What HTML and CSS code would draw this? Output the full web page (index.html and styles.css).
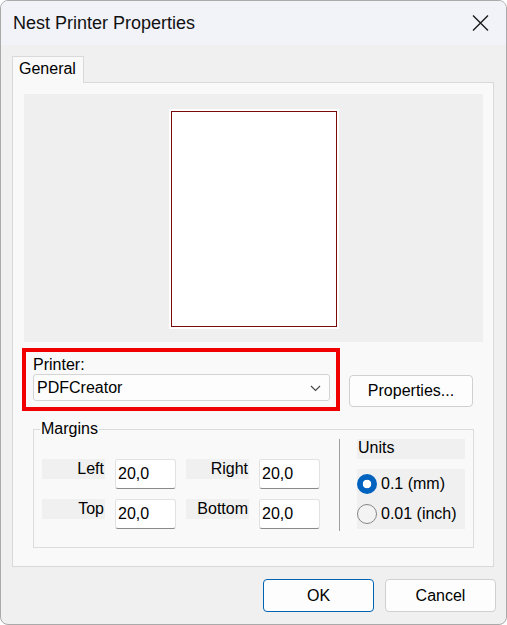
FILE: index.html
```html
<!DOCTYPE html>
<html>
<head>
<meta charset="utf-8">
<link rel="stylesheet" href="styles.css">
</head>
<body>
<div class="window">
  <div class="titlebar">
    <span class="title">Nest Printer Properties</span>
    <svg class="close" width="17" height="16" viewBox="0 0 17 16"><path d="M1 0.5 L16 15.5 M16 0.5 L1 15.5" stroke="#1a1a1a" stroke-width="1.4" fill="none"/></svg>
  </div>
  <div class="body">
    <div class="tabs"><div class="tab">General</div></div>
    <div class="panel">
      <div class="preview"><div class="page"></div></div>
      <div class="printer-row">
        <div class="highlight">
          <div class="lbl">Printer:</div>
          <div class="combo">
            <span>PDFCreator</span>
            <svg class="chev" width="11" height="7" viewBox="0 0 11 7"><path d="M1 1 L5.5 5.5 L10 1" stroke="#444" stroke-width="1.1" fill="none"/></svg>
          </div>
        </div>
        <div class="btn props">Properties...</div>
      </div>
      <fieldset class="margins">
        <legend>Margins</legend>
        <div class="mgrid">
          <div class="mlabel">Left</div><div class="input">20,0</div>
          <div class="mlabel">Right</div><div class="input">20,0</div>
          <div class="mlabel">Top</div><div class="input">20,0</div>
          <div class="mlabel">Bottom</div><div class="input">20,0</div>
        </div>
        <div class="sep"></div>
        <div class="units">
          <div class="ulabel">Units</div>
          <div class="radios">
            <div class="radio"><span class="dot on"></span><span>0.1 (mm)</span></div>
            <div class="radio"><span class="dot"></span><span>0.01 (inch)</span></div>
          </div>
        </div>
      </fieldset>
    </div>
    <div class="buttons">
      <div class="btn ok">OK</div>
      <div class="btn cancel">Cancel</div>
    </div>
  </div>
</div>
</body>
</html>
```
FILE: styles.css
```css
html, body {
  margin: 0;
  padding: 0;
  background: #ffffff;
}
body {
  font-family: "Liberation Sans", Arial, sans-serif;
  font-size: 16px;
  color: #000;
}
.window {
  width: 507px;
  height: 625px;
  box-sizing: border-box;
  border: 1px solid #aaaaaa;
  border-radius: 8px;
  overflow: hidden;
  background: #f0f0f0;
}
.titlebar {
  height: 44px;
  background: #f1f3f9;
  display: flex;
  align-items: center;
  justify-content: space-between;
}
.title {
  font-size: 18px;
  padding-left: 12px;
  color: #111;
}
.close {
  margin-right: 17px;
}
.body {
  padding: 11px 12px 0 11px;
}
.tabs {
  display: flex;
}
.tab {
  position: relative;
  z-index: 1;
  width: 72px;
  height: 27px;
  box-sizing: border-box;
  border: 1px solid #d9d9d9;
  border-bottom: none;
  background: #f9f9f9;
  padding: 3px 0 0 6px;
  line-height: 18px;
}
.panel {
  margin-top: -1px;
  height: 485px;
  box-sizing: border-box;
  border: 1px solid #d9d9d9;
  background: #f9f9f9;
  padding: 11px 10px 0 11px;
}
.preview {
  width: 459px;
  height: 248px;
  box-sizing: border-box;
  background: #efefef;
  padding-top: 15px;
  display: flex;
  justify-content: center;
}
.page {
  width: 170px;
  height: 220px;
  box-sizing: border-box;
  background: #ffffff;
  padding: 2px;
  margin-left: 1px;
}
.page::before {
  content: "";
  display: block;
  width: 100%;
  height: 100%;
  box-sizing: border-box;
  border: 1px solid #7a0a0a;
}
.printer-row {
  display: flex;
  margin-top: 6px;
  margin-left: -2px;
}
.highlight {
  width: 318px;
  box-sizing: border-box;
  border: 4px solid #f00000;
  padding: 4px 6px 6px 7px;
}
.lbl {
  line-height: 18px;
}
.combo {
  height: 27px;
  box-sizing: border-box;
  border: 1px solid #d4d4d4;
  border-radius: 3px;
  background: #fdfdfd;
  display: flex;
  align-items: center;
  justify-content: space-between;
  padding: 1px 8px 0 3px;
}
.chev {
  margin-top: 1px;
}
.btn {
  box-sizing: border-box;
  border: 1px solid #d0d0d0;
  border-radius: 4px;
  background: #fdfdfd;
  display: flex;
  align-items: center;
  justify-content: center;
}
.props {
  align-self: flex-end;
  margin-left: 9px;
  margin-bottom: 4px;
  width: 124px;
  height: 32px;
}
.margins {
  margin: 9px 0 0 9px;
  width: 441px;
  min-width: 0;
  box-sizing: border-box;
  border: 1px solid #dcdcdc;
  padding: 1px 8px 16px 8px;
  display: flex;
  align-items: flex-start;
}
.margins legend {
  padding: 0 1px;
  margin-left: -2px;
  line-height: 18px;
}
.mgrid {
  margin-top: 20px;
  display: grid;
  grid-template-columns: 63px 61px 63px 61px;
  grid-auto-rows: 30px;
  column-gap: 10px;
  row-gap: 10px;
}
.mlabel {
  height: 20px;
  background: #f0f0f0;
  text-align: right;
  line-height: 20px;
  padding-right: 1px;
}
.input {
  box-sizing: border-box;
  border: 1px solid #e2e2e2;
  border-bottom-color: #8a8a8a;
  border-radius: 3px;
  background: #ffffff;
  padding: 4px 0 0 2px;
  line-height: 20px;
}
.sep {
  width: 1px;
  height: 92px;
  background: #a0a0a0;
  margin-left: 19px;
}
.units {
  margin-left: 17px;
  width: 108px;
}
.ulabel {
  height: 20px;
  line-height: 18px;
  background: #f0f0f0;
  padding-left: 1px;
}
.radios {
  margin-top: 10px;
  background: #f0f0f0;
  height: 60px;
}
.radio {
  height: 30px;
  display: flex;
  align-items: center;
  gap: 4px;
}
.dot {
  width: 20px;
  height: 20px;
  box-sizing: border-box;
  border-radius: 50%;
  border: 1px solid #868686;
  background: #f3f3f3;
}
.dot.on {
  border: none;
  background: radial-gradient(circle, #ffffff 0 4px, #0062bf 4.6px);
}
.buttons {
  display: flex;
  justify-content: flex-end;
  gap: 11px;
  margin-top: 12px;
  margin-right: -2px;
}
.buttons .btn {
  width: 111px;
  height: 33px;
}
.ok {
  border-color: #0063b1;
}
```
